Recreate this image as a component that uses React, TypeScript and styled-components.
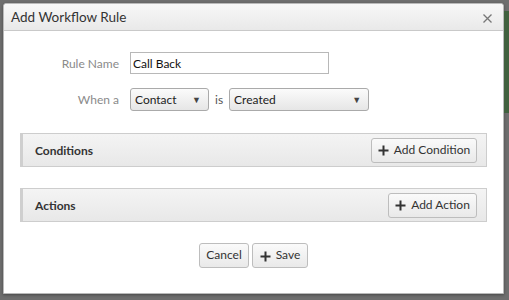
import React from 'react';
import styled, { createGlobalStyle } from 'styled-components';

const GlobalStyle = createGlobalStyle`
  html, body {
    margin: 0;
    padding: 0;
    background: #6e6e6e;
  }
  * {
    box-sizing: border-box;
  }
`;

const Backdrop = styled.div`
  width: 509px;
  height: 300px;
  display: flex;
  padding-top: 3px;
  background: #6e6e6e;
  font-family: Lato, 'Open Sans', sans-serif;
  overflow: hidden;
`;

const Gutter = styled.div<{ $width: number }>`
  width: ${(p) => p.$width}px;
  flex-shrink: 0;
  display: flex;
  flex-direction: column;
`;

const GreenStrip = styled.div`
  margin-top: 8px;
  height: 102px;
  background: #41613f;
`;

const Dialog = styled.div`
  width: 501px;
  height: 291px;
  background: #fff;
  border: 1px solid #b9b9b9;
  border-radius: 3px 3px 0 0;
  display: flex;
  flex-direction: column;
  box-shadow: 0 1px 3px rgba(0, 0, 0, 0.35);
`;

const Header = styled.div`
  height: 27px;
  display: flex;
  align-items: center;
  justify-content: space-between;
  padding: 0 10px 0 7px;
  background: linear-gradient(#f7f7f7, #e9e9e9);
  border-bottom: 1px solid #c9c9c9;
  border-radius: 3px 3px 0 0;
`;

const Title = styled.h2`
  margin: 0;
  font-size: 13.5px;
  font-weight: 400;
  color: #333;
`;

const CloseButton = styled.button`
  border: none;
  background: none;
  padding: 0;
  width: 12px;
  height: 12px;
  margin-top: 3px;
  display: flex;
  align-items: center;
  justify-content: center;
  cursor: pointer;
`;

const Form = styled.div`
  display: grid;
  grid-template-columns: 115px auto;
  column-gap: 11px;
  row-gap: 14px;
  align-items: center;
  margin-top: 21px;
`;

const Label = styled.label`
  text-align: right;
  font-size: 12px;
  color: #8a8a8a;
`;

const TextInput = styled.input`
  width: 199px;
  height: 22px;
  border: 1px solid #b8b8b8;
  padding: 0 2px;
  font-family: inherit;
  font-size: 12px;
  color: #111;
  outline: none;
`;

const Inline = styled.div`
  display: flex;
  align-items: center;
  gap: 6px;
`;

const Select = styled.div<{ $width: number }>`
  width: ${(p) => p.$width}px;
  height: 23px;
  border: 1px solid #aaa;
  border-radius: 3px;
  background: linear-gradient(#fbfbfb, #e6e6e6);
  display: flex;
  align-items: center;
  justify-content: space-between;
  padding: 0 7px 0 4px;
  font-size: 12px;
  color: #222;
`;

const Caret = styled.span`
  font-size: 9px;
  color: #444;
`;

const Small = styled.span`
  font-size: 12px;
  color: #555;
`;

const Panels = styled.div`
  display: flex;
  flex-direction: column;
  gap: 21px;
  margin: 22px 16px 0 16px;
`;

const Panel = styled.div`
  height: 34px;
  display: flex;
  align-items: center;
  justify-content: space-between;
  padding: 0 9px 0 12px;
  border: 1px solid #cdcdcd;
  border-left: 3px solid #cfcfcf;
  background: linear-gradient(#f4f4f4, #e8e8e8);
`;

const PanelTitle = styled.span`
  font-size: 12px;
  font-weight: 700;
  color: #333;
`;

const Button = styled.button<{ $width?: number }>`
  height: 25px;
  ${(p) => (p.$width ? `width: ${p.$width}px;` : '')}
  display: inline-flex;
  align-items: center;
  justify-content: center;
  gap: 5px;
  padding: 0 0 2px;
  white-space: nowrap;
  border: 1px solid #bdbdbd;
  border-radius: 3px;
  background: linear-gradient(#fafafa, #e9e9e9);
  font-family: inherit;
  font-size: 12px;
  color: #333;
  cursor: pointer;
`;

const Footer = styled.div`
  display: flex;
  justify-content: center;
  gap: 3px;
  margin-top: 21px;
`;

const Plus = () => (
  <svg width="11" height="11" viewBox="0 0 11 11" style={{ marginTop: 3, flexShrink: 0 }}>
    <path d="M5.5 0.5v10M0.5 5.5h10" stroke="#333" strokeWidth="2" />
  </svg>
);

const CloseIcon = () => (
  <svg width="9" height="9" viewBox="0 0 9 9">
    <path d="M0.5 0.5l8 8M8.5 0.5l-8 8" stroke="#777" strokeWidth="1.3" />
  </svg>
);

const App: React.FC = () => {
  return (
    <>
      <GlobalStyle />
      <Backdrop>
        <Gutter $width={3} />
        <Dialog>
          <Header>
            <Title>Add Workflow Rule</Title>
            <CloseButton aria-label="Close">
              <CloseIcon />
            </CloseButton>
          </Header>

          <Form>
            <Label>Rule Name</Label>
            <TextInput defaultValue="Call Back" />
            <Label>When a</Label>
            <Inline>
              <Select $width={79}>
                Contact <Caret>▼</Caret>
              </Select>
              <Small>is</Small>
              <Select $width={140}>
                Created <Caret>▼</Caret>
              </Select>
            </Inline>
          </Form>

          <Panels>
            <Panel>
              <PanelTitle>Conditions</PanelTitle>
              <Button $width={106}>
                <Plus /> Add Condition
              </Button>
            </Panel>
            <Panel>
              <PanelTitle>Actions</PanelTitle>
              <Button $width={89}>
                <Plus /> Add Action
              </Button>
            </Panel>
          </Panels>

          <Footer>
            <Button $width={50}>Cancel</Button>
            <Button $width={56}>
              <Plus /> Save
            </Button>
          </Footer>
        </Dialog>
        <Gutter $width={5}>
          <GreenStrip />
        </Gutter>
      </Backdrop>
    </>
  );
};

export default App;
